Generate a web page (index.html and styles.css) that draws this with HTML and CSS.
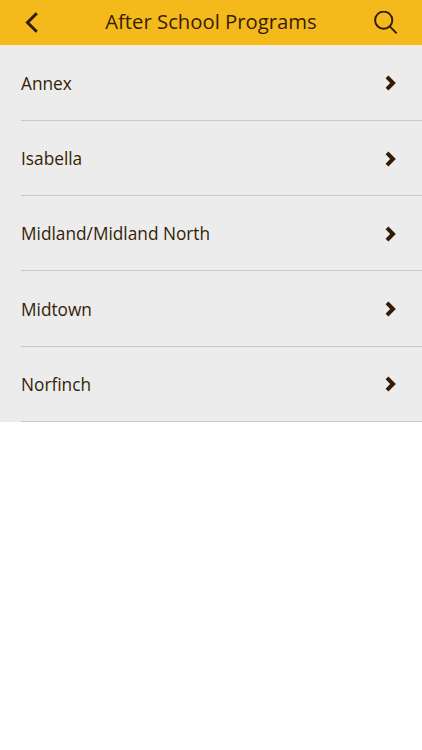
FILE: index.html
```html
<!DOCTYPE html>
<html lang="en">
<head>
<meta charset="utf-8">
<title>After School Programs</title>
<link rel="stylesheet" href="styles.css">
</head>
<body>
<header class="bar">
  <svg class="back" viewBox="0 0 14 22"><path d="M12.800 1.300 3.500 10.500l9.300 9.200"/></svg>
  <h1 class="title">After School Programs</h1>
  <svg class="search" viewBox="0 0 24 24"><circle cx="9.700" cy="9.200" r="8.600"/><path d="m15.800 15.400 6.800 6.900"/></svg>
</header>
<ul class="list">
  <li class="row"><span>Annex</span><svg class="chevron" viewBox="0 0 12 16"><path d="m2 1.900 6 6.100-6 6.100"/></svg></li>
  <li class="row"><span>Isabella</span><svg class="chevron" viewBox="0 0 12 16"><path d="m2 1.900 6 6.100-6 6.100"/></svg></li>
  <li class="row"><span>Midland/Midland North</span><svg class="chevron" viewBox="0 0 12 16"><path d="m2 1.900 6 6.100-6 6.100"/></svg></li>
  <li class="row"><span>Midtown</span><svg class="chevron" viewBox="0 0 12 16"><path d="m2 1.900 6 6.100-6 6.100"/></svg></li>
  <li class="row"><span>Norfinch</span><svg class="chevron" viewBox="0 0 12 16"><path d="m2 1.900 6 6.100-6 6.100"/></svg></li>
</ul>
</body>
</html>
```
FILE: styles.css
```css
* { box-sizing: border-box; }
body { margin: 0; background: #fff; color: #351e08; font-family: "Open Sans", sans-serif; }
svg { fill: none; stroke: #351b04; display: block; }
.bar { height: 45px; padding: 0 24px; background: #f4b91a; display: grid; grid-template-columns: 24px 1fr 24px; align-items: center; }
.title { margin: 0; padding-bottom: 2px; font-size: 20.3px; font-weight: 400; line-height: 43px; text-align: center; white-space: nowrap; }
.back { width: 14px; height: 22px; stroke-width: 3; }
.search { width: 24px; height: 24px; stroke-width: 1.9; }
.list { margin: 0; padding: 0.600px 0 0 21px; list-style: none; background: #ececec; border-top: 1px solid #f0e8d2; }
.row { height: 75.250px; padding: 1.200px 25px 0 0; border-bottom: 1px solid #c9c6c7; display: flex; align-items: center; justify-content: space-between; font-size: 17.280px; }
.row:first-child { height: 74.250px; padding-top: 0; }
.chevron { width: 12px; height: 16px; stroke-width: 4; }
```
